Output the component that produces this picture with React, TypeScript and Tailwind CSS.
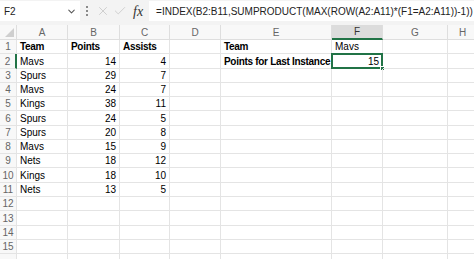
import { ChevronDown, X, Check } from "lucide-react";

const cols = [
  { key: "A", w: "w-[51px]" },
  { key: "B", w: "w-[52px]" },
  { key: "C", w: "w-[50px]" },
  { key: "D", w: "w-[51px]" },
  { key: "E", w: "w-[111px]" },
  { key: "F", w: "w-[51px]" },
  { key: "G", w: "w-[65px]" },
  { key: "H", w: "w-[30px]" },
];

const heights = [
  "h-[14px]", "h-[15px]", "h-[14px]", "h-[14px]", "h-[14px]",
  "h-[15px]", "h-[14px]", "h-[14px]", "h-[14px]", "h-[15px]",
  "h-[14px]", "h-[14px]", "h-[15px]", "h-[14px]", "h-[14px]", "h-[14px]",
];

type Cell = { v: string; right?: boolean; bold?: boolean };

const data: Record<number, Record<string, Cell>> = {
  1: {
    A: { v: "Team", bold: true },
    B: { v: "Points", bold: true },
    C: { v: "Assists", bold: true },
    E: { v: "Team", bold: true },
    F: { v: "Mavs" },
  },
  2: { E: { v: "Points for Last Instance", bold: true }, F: { v: "15", right: true } },
};

const rows: [string, string, string][] = [
  ["Mavs", "14", "4"],
  ["Spurs", "29", "7"],
  ["Mavs", "24", "7"],
  ["Kings", "38", "11"],
  ["Spurs", "24", "5"],
  ["Spurs", "20", "8"],
  ["Mavs", "15", "9"],
  ["Nets", "18", "12"],
  ["Kings", "18", "10"],
  ["Nets", "13", "5"],
];
rows.forEach(([t, p, a], i) => {
  const r = i + 2;
  data[r] = { ...(data[r] || {}), A: { v: t }, B: { v: p, right: true }, C: { v: a, right: true } };
});

export default function App() {
  return (
    <div className="w-[474px] h-[259px] overflow-hidden bg-white font-['Liberation_Sans',sans-serif] text-[10px] text-black">
      {/* formula bar */}
      <div className="flex h-[22px] items-center bg-[#f3f3f3]">
        <div className="flex h-[20px] w-[80px] items-center justify-between bg-white pl-[4px] pr-[3px] text-[10px] text-[#222]">
          <span>F2</span>
          <ChevronDown className="size-[11px] text-[#555]" strokeWidth={2.2} />
        </div>
        <div className="flex w-[13px] flex-col items-center gap-[2px]">
          <span className="size-[2px] rounded-full bg-[#666]" />
          <span className="size-[2px] rounded-full bg-[#666]" />
          <span className="size-[2px] rounded-full bg-[#666]" />
        </div>
        <div className="flex items-center gap-[3px] pl-[3px]">
          <X className="size-[14px] text-[#c3c3c3]" strokeWidth={1.3} />
          <Check className="size-[14px] text-[#c3c3c3]" strokeWidth={1.3} />
        </div>
        <span className="ml-[6px] font-['Liberation_Serif',serif] text-[14px] italic text-[#333]">fx</span>
        <div className="ml-[6px] flex h-[20px] flex-1 items-center whitespace-nowrap bg-white pl-[7px] text-[10px] text-[#222]">
          =INDEX(B2:B11,SUMPRODUCT(MAX(ROW(A2:A11)*(F1=A2:A11))-1))
        </div>
      </div>
      <div className="h-[3px] bg-[#f3f3f3]" />

      {/* column headers */}
      <div className="flex h-[15px] bg-[#f8f8f8] text-[#666]">
        <div className="relative w-[17px] shrink-0 border-r border-b border-[#dedede]">
          <svg className="absolute right-[2px] bottom-[2px]" width="9" height="9">
            <polygon points="9,0 9,9 0,9" fill="#cfcfcf" />
          </svg>
        </div>
        {cols.map((c) => (
          <div
            key={c.key}
            className={`${c.w} flex shrink-0 items-center justify-center ${
              c.key === "F"
                ? "border-b-2 border-r border-b-[#217346] border-r-[#dedede] bg-[#dcdcdc] text-[#333]"
                : "border-r border-b border-[#dedede]"
            }`}
          >
            {c.key}
          </div>
        ))}
      </div>

      {/* rows */}
      {heights.map((h, i) => {
        const r = i + 1;
        return (
          <div key={r} className={`flex ${h}`}>
            <div
              className={`flex w-[17px] shrink-0 items-center justify-center bg-[#f8f8f8] text-[#666] ${
                r === 2 ? "border-r-2 border-b border-r-[#217346] border-b-[#e4e4e4] bg-[#ececec]" : "border-r border-b border-[#e4e4e4]"
              }`}
            >
              {r <= 15 ? r : ""}
            </div>
            {cols.map((c) => {
              const cell = data[r]?.[c.key];
              const sel = r === 2 && c.key === "F";
              return (
                <div
                  key={c.key}
                  className={`${c.w} relative flex shrink-0 items-center overflow-visible whitespace-nowrap border-r border-b border-[#e4e4e4] ${
                    cell?.right ? "justify-end pr-[3px]" : "pl-[3px]"
                  } ${cell?.bold ? "font-bold tracking-[-0.3px]" : ""}`}
                >
                  {cell?.v}
                  {sel && (
                    <>
                      <div className="pointer-events-none absolute -top-px -left-px right-[-1px] bottom-[-1px] border-2 border-[#217346]" />
                      <div className="absolute right-[-3px] bottom-[-3px] size-[5px] border border-white bg-[#217346]" />
                    </>
                  )}
                </div>
              );
            })}
          </div>
        );
      })}
    </div>
  );
}
